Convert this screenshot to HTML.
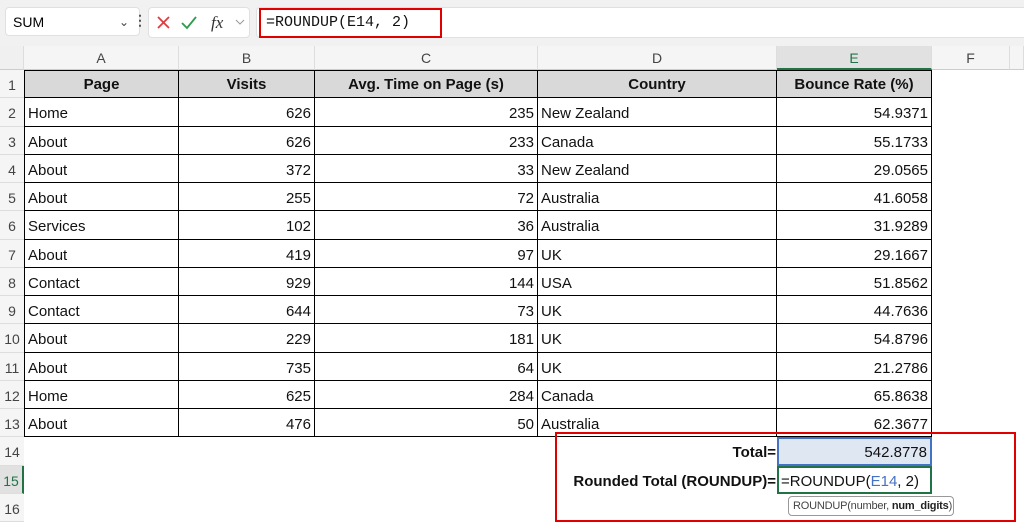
<!DOCTYPE html>
<html><head><meta charset="utf-8"><style>
body{margin:0;width:1024px;height:528px;overflow:hidden;background:#fff;font-family:"Liberation Sans",sans-serif;position:relative}
.top{position:absolute;left:0;top:0;width:1024px;height:46px;background:#f1f1f1}
.box{position:absolute;background:#fff;border:1px solid #e0e0e0;border-radius:4px}
.g{position:absolute;left:0;top:46px;display:grid;grid-template-columns:24px 155px 136px 223px 239px 155px 78px 14px;grid-template-rows:24px repeat(16,28.25px)}
.g div{box-sizing:border-box;font-size:15px;line-height:31px;white-space:nowrap;overflow:visible;padding:0 3px;color:#111}
.ch{background:#f5f5f5;text-align:center;color:#444!important;font-size:14px!important;line-height:24px!important;border-right:1px solid #ddd;border-bottom:1px solid #ccc}
.rh{background:#f5f5f5;text-align:center;color:#444!important;font-size:14px!important;border-bottom:1px solid #ddd;padding:0!important}
.c{border-right:1px solid #000;border-bottom:1px solid #000}
.r{text-align:right}
.h{background:#d9d9d9;font-weight:bold;text-align:center;border-top:1px solid #000;line-height:28px!important}
.f{border-left:1px solid #000}
</style></head><body>
<div class="top"></div>
<div class="box" style="left:5px;top:7px;width:135px;height:29px;font-size:14px;line-height:29px;padding-left:7px;box-sizing:border-box">SUM<span style="position:absolute;right:10px;top:0;font-size:12px;color:#444">&#8964;</span></div>
<div style="position:absolute;left:133px;top:12px;font-size:14px;color:#555;font-weight:bold">&#8942;</div>
<div class="box" style="left:148px;top:7px;width:100px;height:29px">
<svg width="100" height="29" style="position:absolute;left:0;top:0"><path d="M9 9l11 11M20 9L9 20" stroke="#e0393e" stroke-width="1.8" fill="none"/><path d="M33 15l5 5 9-11" stroke="#2e9b4e" stroke-width="1.8" fill="none"/><text x="62" y="20" font-family="Liberation Serif" font-style="italic" font-size="17" fill="#333">fx</text><path d="M87 12l4 4 4-4" stroke="#999" fill="none"/></svg></div>
<div class="box" style="left:256px;top:7px;width:770px;height:29px"></div>
<div style="position:absolute;left:259px;top:8px;width:183px;height:30px;border:2px solid #e00000;box-sizing:border-box;font-family:'Liberation Mono',monospace;font-size:15px;line-height:26px;padding-left:5px;color:#111">=ROUNDUP(E14, 2)</div>
<div class="g">
<div class="ch" style="background:#f0f0f0"></div><div class="ch">A</div><div class="ch">B</div><div class="ch">C</div><div class="ch">D</div><div class="ch" style="background:#e1e1e1;border-bottom:2px solid #217346;color:#217346!important">E</div><div class="ch">F</div><div class="ch"></div>
<div class="rh">1</div><div class="c h f">Page</div><div class="c h">Visits</div><div class="c h">Avg. Time on Page (s)</div><div class="c h">Country</div><div class="c h">Bounce Rate (%)</div><div></div><div></div>
<div class="rh">2</div><div class="c f">Home</div><div class="c r">626</div><div class="c r">235</div><div class="c">New Zealand</div><div class="c r">54.9371</div><div></div><div></div>
<div class="rh">3</div><div class="c f">About</div><div class="c r">626</div><div class="c r">233</div><div class="c">Canada</div><div class="c r">55.1733</div><div></div><div></div>
<div class="rh">4</div><div class="c f">About</div><div class="c r">372</div><div class="c r">33</div><div class="c">New Zealand</div><div class="c r">29.0565</div><div></div><div></div>
<div class="rh">5</div><div class="c f">About</div><div class="c r">255</div><div class="c r">72</div><div class="c">Australia</div><div class="c r">41.6058</div><div></div><div></div>
<div class="rh">6</div><div class="c f">Services</div><div class="c r">102</div><div class="c r">36</div><div class="c">Australia</div><div class="c r">31.9289</div><div></div><div></div>
<div class="rh">7</div><div class="c f">About</div><div class="c r">419</div><div class="c r">97</div><div class="c">UK</div><div class="c r">29.1667</div><div></div><div></div>
<div class="rh">8</div><div class="c f">Contact</div><div class="c r">929</div><div class="c r">144</div><div class="c">USA</div><div class="c r">51.8562</div><div></div><div></div>
<div class="rh">9</div><div class="c f">Contact</div><div class="c r">644</div><div class="c r">73</div><div class="c">UK</div><div class="c r">44.7636</div><div></div><div></div>
<div class="rh">10</div><div class="c f">About</div><div class="c r">229</div><div class="c r">181</div><div class="c">UK</div><div class="c r">54.8796</div><div></div><div></div>
<div class="rh">11</div><div class="c f">About</div><div class="c r">735</div><div class="c r">64</div><div class="c">UK</div><div class="c r">21.2786</div><div></div><div></div>
<div class="rh">12</div><div class="c f">Home</div><div class="c r">625</div><div class="c r">284</div><div class="c">Canada</div><div class="c r">65.8638</div><div></div><div></div>
<div class="rh">13</div><div class="c f">About</div><div class="c r">476</div><div class="c r">50</div><div class="c">Australia</div><div class="c r">62.3677</div><div></div><div></div>
<div class="rh">14</div><div></div><div></div><div></div><div class="r" style="font-weight:bold;padding:0 1px">Total=</div><div class="r" style="background:#dfe7f3;border:2px solid #4472c4;line-height:27px">542.8778</div><div></div><div></div>
<div class="rh" style="background:#e1e1e1;color:#217346!important;border-right:2px solid #217346">15</div><div></div><div></div><div></div><div class="r" style="font-weight:bold;padding:0 1px">Rounded Total (ROUNDUP)=</div><div style="border:2px solid #217346;padding-left:2px;line-height:27px">=ROUNDUP(<span style="color:#4472c4">E14</span>, 2)</div><div></div><div></div>
<div class="rh">16</div><div></div><div></div><div></div><div></div><div></div><div></div><div></div>
</div>
<div style="position:absolute;left:788px;top:496px;width:166px;height:20px;border:1px solid #999;border-radius:4px;background:#fff;font-size:11px;letter-spacing:-0.2px;line-height:19px;color:#444;padding-left:4px;box-sizing:border-box;white-space:nowrap">ROUNDUP(number, <b style="color:#222">num_digits</b>)</div>
<div style="position:absolute;left:555px;top:432px;width:461px;height:90px;border:2px solid #e00000;box-sizing:border-box"></div>
</body></html>
